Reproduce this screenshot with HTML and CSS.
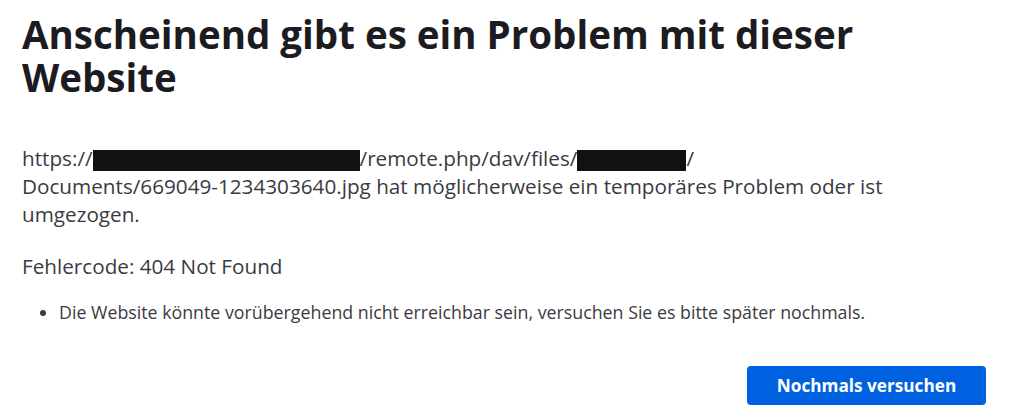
FILE: index.html
```html
<!DOCTYPE html>
<html lang="de">
<head>
<meta charset="utf-8">
<title>Problem beim Laden der Seite</title>
<link rel="stylesheet" href="styles.css">
</head>
<body>
<main class="container">
  <h1 class="title">Anscheinend gibt es ein Problem mit dieser Website</h1>
  <p class="desc">https://<span class="redact redact-host"></span>/remote.php/dav/files/<span class="redact redact-user"></span>/<br>Documents/669049-1234303640.jpg hat möglicherweise ein temporäres Problem oder ist<br>umgezogen.</p>
  <p class="code">Fehlercode: 404 Not Found</p>
  <ul class="hints">
    <li>Die Website könnte vorübergehend nicht erreichbar sein, versuchen Sie es bitte später nochmals.</li>
  </ul>
  <div class="actions">
    <button class="retry" type="button">Nochmals versuchen</button>
  </div>
</main>
</body>
</html>
```

FILE: styles.css
```css
html, body {
  margin: 0;
  padding: 0;
  background: #ffffff;
}
body {
  font-family: "Open Sans", "Noto Sans", sans-serif;
  color: #3b3a42;
}
.container {
  width: 964px;
  padding: 13px 0 0 22px;
  display: flex;
  flex-direction: column;
}
.title {
  margin: 0;
  font-size: 38.5px;
  line-height: 43px;
  font-weight: 700;
  color: #1c1b22;
  width: 880px;
}
.desc {
  margin: 45px 0 0;
  font-size: 20.7px;
  line-height: 28px;
}
.redact {
  display: inline-block;
  height: 21px;
  background: #111114;
  vertical-align: -5px;
}
.redact-host { width: 267px; }
.redact-user { width: 109px; }
.code {
  margin: 24px 0 0;
  font-size: 20.7px;
  line-height: 28px;
}
.hints {
  margin: 20px 0 0;
  padding-left: 37px;
  font-size: 17.8px;
  line-height: 24px;
}
.actions {
  display: flex;
  justify-content: flex-end;
  margin-top: 42px;
}
.retry {
  font-family: inherit;
  font-size: 17.2px;
  font-weight: 700;
  color: #ffffff;
  background: #0061e0;
  border: none;
  border-radius: 4px;
  width: 239px;
  height: 39px;
  cursor: pointer;
}
```
